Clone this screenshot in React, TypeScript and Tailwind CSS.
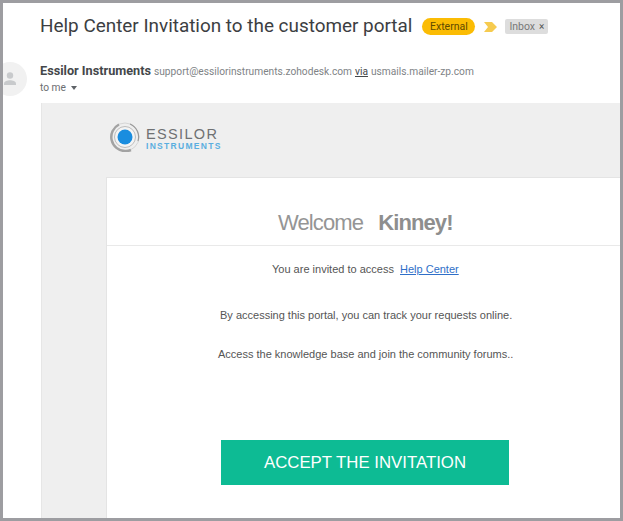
function EssilorLogo() {
  return (
    <div className="flex items-center gap-[6px]">
      <svg width="30" height="30" viewBox="0 0 30 30">
        <circle cx="15" cy="15" r="14" fill="none" stroke="#d6d6d6" strokeWidth="1" />
        <path d="M9 2.5 A14 14 0 0 0 15 29 A14 14 0 0 0 21 28" fill="none" stroke="#a3a3a3" strokeWidth="2.5" />
        <path d="M20 2 A14 14 0 0 1 28 19" fill="none" stroke="#9a9a9a" strokeWidth="1.2" />
        <circle cx="15" cy="15" r="10.5" fill="#f4f4f4" stroke="#bdbdbd" strokeWidth="1" />
        <circle cx="15" cy="15" r="7.5" fill="#1a8ddf" />
      </svg>
      <div className="mt-[4px] flex flex-col font-['Liberation_Sans',sans-serif]">
        <span className="text-[14.5px] leading-[13px] tracking-[1.35px] text-[#6f7173]">ESSILOR</span>
        <span className="mt-[1px] text-[8.5px] leading-[8px] font-bold tracking-[1.3px] text-[#5aaee0]">INSTRUMENTS</span>
      </div>
    </div>
  );
}

export default function App() {
  return (
    <div className="h-[521px] w-[623px] overflow-hidden border-[3px] border-[#9d9da1] bg-white font-['Roboto',sans-serif]">
      <div className="flex h-[35px] items-center pt-[12px] pl-[37px]">
        <h1 className="text-[18.9px] leading-none font-normal text-[#3c3e42]">Help Center Invitation to the customer portal</h1>
        <span className="ml-[10px] flex h-[17px] w-[53px] items-center justify-center rounded-full bg-[#fbbc04] text-[10.5px] text-[#5f4a00]">External</span>
        <svg className="ml-[9px]" width="13" height="10" viewBox="0 0 13 10">
          <path d="M0 0 H8 L13 5 L8 10 H0 L4 5 Z" fill="#f6cb4f" />
        </svg>
        <span className="ml-[8px] flex h-[15px] w-[43px] items-center justify-center gap-[4px] rounded-[2px] bg-[#dddddd] text-[10.5px] text-[#777777]">
          Inbox <span className="text-[10px] leading-none text-[#555555]">×</span>
        </span>
      </div>

      <div className="flex h-[65px]">
        <div className="mt-[24px] ml-[-10px] flex h-[34px] w-[34px] shrink-0 items-center justify-center rounded-full bg-[#f1f1f1]">
          <svg width="14" height="14" viewBox="0 0 14 14" fill="#c8cacc">
            <circle cx="7" cy="3.5" r="3.2" />
            <path d="M1 13 V11.5 C1 9.2 4.5 8.2 7 8.2 C9.5 8.2 13 9.2 13 11.5 V13 Z" />
          </svg>
        </div>
        <div className="ml-[13px] pt-[25px]">
          <div className="flex items-baseline text-[10.2px] leading-[15px] whitespace-nowrap text-[#808386]">
            <span className="mr-[3px] text-[12.7px] font-bold text-[#44474a]">Essilor Instruments</span>
            support@essilorinstruments.zohodesk.com
            <span className="mx-[3px] text-[#44474a] underline">via</span>
            usmails.mailer-zp.com
          </div>
          <div className="mt-[1px] flex items-center text-[10.2px] leading-[15px] text-[#6b6e71]">
            to me
            <span className="ml-[5px] h-0 w-0 border-x-[3.5px] border-t-[4px] border-x-transparent border-t-[#5f6368]" />
          </div>
        </div>
      </div>

      <div className="ml-[38px] h-[420px] border-l border-[#e6e6e6] bg-[#efefef] pt-[19px] pl-[64px]">
        <div className="ml-[4px] h-[55px]">
          <EssilorLogo />
        </div>
        <div className="h-[400px] border-t border-l border-[#e4e4e4] bg-white font-['Liberation_Sans',sans-serif]">
          <div className="h-[68px] border-b border-[#e9e9e9] pt-[31px] pl-[171px] text-[22px] leading-[28px] tracking-[-0.9px] whitespace-nowrap text-[#959595]">
            Welcome <span className="ml-[10px] font-bold text-[#8e8e8e]">Kinney!</span>
          </div>
          <p className="mt-[16px] pl-[165px] text-[11px] leading-[14px] whitespace-pre text-[#555555]">
            You are invited to access  <a className="text-[#2f6fc8] underline">Help Center</a>
          </p>
          <p className="mt-[32px] pl-[113px] text-[11px] leading-[14px] whitespace-nowrap text-[#555555]">
            By accessing this portal, you can track your requests online.
          </p>
          <p className="mt-[25px] pl-[111px] text-[11px] leading-[14px] whitespace-nowrap text-[#555555]">
            Access the knowledge base and join the community forums..
          </p>
          <a className="mt-[79px] ml-[114px] flex h-[45px] w-[288px] items-center justify-center bg-[#0dbb94] text-[16.8px] text-white">
            ACCEPT THE INVITATION
          </a>
        </div>
      </div>
    </div>
  );
}
